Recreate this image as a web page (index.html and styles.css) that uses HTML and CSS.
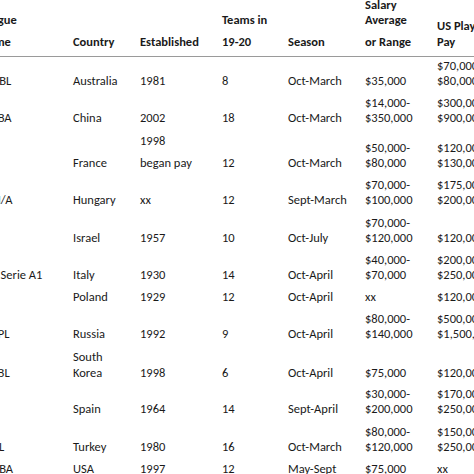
FILE: index.html
```html
<!DOCTYPE html>
<html>
<head>
<meta charset="utf-8">
<link rel="stylesheet" href="styles.css">
</head>
<body>
<div class="sheet">
  <div class="row head">
    <div><div>League</div><div class="gap">Name</div></div>
    <div>Country</div>
    <div>Established</div>
    <div><div>Teams in</div><div class="gap">19-20</div></div>
    <div>Season</div>
    <div><div>Salary</div><div>Average</div><div class="gap">or Range</div></div>
    <div><div>US Play</div><div class="gap1">Pay</div></div>
  </div>
  <div class="row h31">
    <div>WNBL</div><div>Australia</div><div>1981</div><div>8</div><div>Oct-March</div><div>$35,000</div><div><div>$70,000-</div><div>$80,000</div></div>
  </div>
  <div class="row h37">
    <div>WCBA</div><div>China</div><div>2002</div><div>18</div><div>Oct-March</div><div><div>$14,000-</div><div>$350,000</div></div><div><div>$300,000-</div><div>$900,000</div></div>
  </div>
  <div class="row h45">
    <div>LFB</div><div>France</div><div><div>1998</div><div class="gap">began pay</div></div><div>12</div><div>Oct-March</div><div><div>$50,000-</div><div>$80,000</div></div><div><div>$120,000-</div><div>$130,000</div></div>
  </div>
  <div class="row h37">
    <div>NB I/A</div><div>Hungary</div><div>xx</div><div>12</div><div>Sept-March</div><div><div>$70,000-</div><div>$100,000</div></div><div><div>$175,000-</div><div>$200,000</div></div>
  </div>
  <div class="row h38">
    <div>IPL</div><div>Israel</div><div>1957</div><div>10</div><div>Oct-July</div><div><div>$70,000-</div><div>$120,000</div></div><div>$120,000</div>
  </div>
  <div class="row h37">
    <div>LBF Serie A1</div><div>Italy</div><div>1930</div><div>14</div><div>Oct-April</div><div><div>$40,000-</div><div>$70,000</div></div><div><div>$200,000-</div><div>$250,000</div></div>
  </div>
  <div class="row h22">
    <div>BLK</div><div>Poland</div><div>1929</div><div>12</div><div>Oct-April</div><div>xx</div><div>$120,000</div>
  </div>
  <div class="row h37">
    <div>RWPL</div><div>Russia</div><div>1992</div><div>9</div><div>Oct-April</div><div><div>$80,000-</div><div>$140,000</div></div><div><div>$500,000-</div><div>$1,500,000</div></div>
  </div>
  <div class="row h39">
    <div>WKBL</div><div><div>South</div><div class="gap1">Korea</div></div><div>1998</div><div>6</div><div>Oct-April</div><div>$75,000</div><div>$120,000</div>
  </div>
  <div class="row h36">
    <div>LF</div><div>Spain</div><div>1964</div><div>14</div><div>Sept-April</div><div><div>$30,000-</div><div>$200,000</div></div><div><div>$170,000-</div><div>$250,000</div></div>
  </div>
  <div class="row h38">
    <div>KBSL</div><div>Turkey</div><div>1980</div><div>16</div><div>Oct-March</div><div><div>$80,000-</div><div>$120,000</div></div><div><div>$150,000-</div><div>$250,000</div></div>
  </div>
  <div class="row h22">
    <div>WNBA</div><div>USA</div><div>1997</div><div>12</div><div>May-Sept</div><div>$75,000</div><div>xx</div>
  </div>
</div>
</body>
</html>
```
FILE: styles.css
```css
html, body {
  margin: 0;
  padding: 0;
  background: #ffffff;
  overflow: hidden;
}
.sheet {
  margin-left: -20px;
  margin-top: -3px;
  width: 560px;
  font-family: "Carlito", "Roboto", sans-serif;
  font-size: 12.5px;
  line-height: 15px;
  color: #1a1a1a;
}
.row {
  display: grid;
  grid-template-columns: 93px 67px 82px 66px 77px 72px 102px;
  align-items: end;
  white-space: nowrap;
}
.head {
  height: 52px;
  padding-bottom: 7px;
  border-bottom: 1px solid #9a9a9a;
  font-weight: bold;
}
.gap { margin-top: 7px; }
.gap1 { margin-top: 1px; }
.h22 { height: 22px; }
.h31 { height: 31px; }
.h36 { height: 36px; }
.h37 { height: 37px; }
.h38 { height: 38px; }
.h39 { height: 39px; }
.h45 { height: 45px; }
```
